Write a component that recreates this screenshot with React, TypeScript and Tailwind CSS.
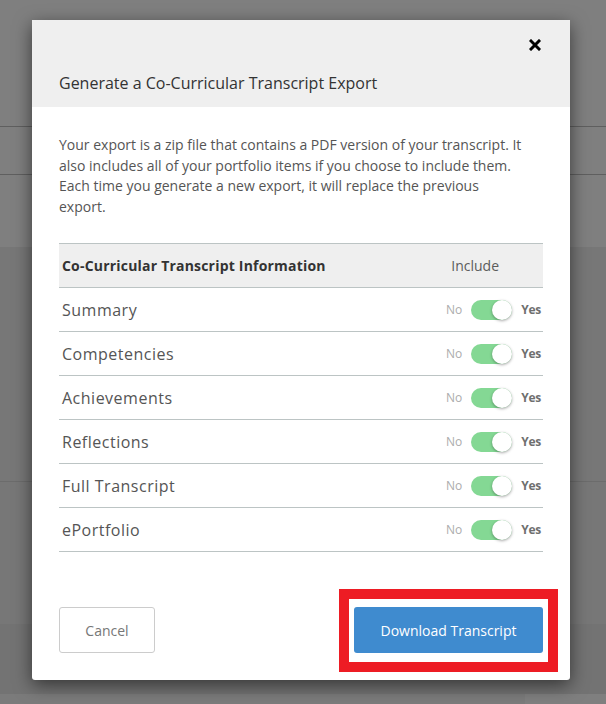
import React from "react";

const rows = [
  "Summary",
  "Competencies",
  "Achievements",
  "Reflections",
  "Full Transcript",
  "ePortfolio",
];

function Toggle() {
  return (
    <div className="flex items-center">
      <span className="text-[12px] text-[#acacac]">No</span>
      <span className="ml-[9px] flex h-[20px] w-[41px] items-center justify-end rounded-full bg-[#84d894]">
        <span className="h-[20px] w-[20px] rounded-full bg-white shadow-[0_1px_3px_rgba(0,0,0,0.35)]" />
      </span>
      <span className="ml-[9px] text-[12px] font-bold tracking-[-0.3px] text-[#6f6f6f]">Yes</span>
    </div>
  );
}

export default function App() {
  return (
    <div
      className="relative h-[704px] w-[606px] overflow-hidden bg-[#7f7f7f]"
      style={{ fontFamily: '"Open Sans", "Liberation Sans", Arial, sans-serif' }}
    >
      {/* dimmed page underneath */}
      <div className="flex flex-col">
        <div className="h-[126px]" />
        <div className="h-px bg-[#5f5f5f]" />
        <div className="h-[47px]" />
        <div className="h-px bg-[#5f5f5f]" />
        <div className="h-[72px]" />
        <div className="h-[234px] bg-[#777777]" />
        <div className="h-px bg-[#6c6c6c]" />
        <div className="h-[142px] bg-[#777777]" />
        <div className="h-[70px] bg-[#737373]" />
        <div className="h-[10px] w-[525px] bg-[#7b7b7b]" />
      </div>

      {/* modal */}
      <div className="absolute left-[32px] top-[20px] flex h-[660px] w-[538px] flex-col rounded-b-[3px] bg-white shadow-[0_5px_18px_rgba(0,0,0,0.55)]">
        <div className="flex h-[87px] flex-col bg-[#efefef] pl-[27px] pr-[29px] pt-[19px]">
          <button className="self-end text-black" aria-label="Close">
            <svg width="12" height="12" viewBox="0 0 12 12">
              <path
                d="M2 2 L10 10 M10 2 L2 10"
                stroke="currentColor"
                strokeWidth="3"
                strokeLinecap="square"
              />
            </svg>
          </button>
          <h2 className="mt-[20px] text-[16px] leading-[24px] text-[#333333]">
            Generate a Co-Curricular Transcript Export
          </h2>
        </div>

        <div className="flex flex-1 flex-col px-[27px] pt-[28px]">
          <p className="text-[14px] leading-[20.5px] text-[#555555]">
            Your export is a zip file that contains a PDF version of your transcript. It
            <br />
            also includes all of your portfolio items if you choose to include them.
            <br />
            Each time you generate a new export, it will replace the previous
            <br />
            export.
          </p>

          <div className="mt-[26px] border-t border-[#bcc4c4]">
            <div className="flex h-[44px] items-center justify-between border-b border-[#bcc4c4] bg-[#efefef] pl-[3px] pr-[44px]">
              <span className="text-[14px] font-bold tracking-[0.2px] text-[#333333]">
                Co-Curricular Transcript Information
              </span>
              <span className="text-[14px] text-[#5c5c5c]">Include</span>
            </div>
            {rows.map((r) => (
              <div
                key={r}
                className="flex h-[44px] items-center justify-between border-b border-[#bcc4c4] pl-[3px] pr-[2px]"
              >
                <span className="text-[16px] tracking-[0.5px] text-[#555555]">{r}</span>
                <Toggle />
              </div>
            ))}
          </div>

          <div className="mt-[55px] flex items-center justify-between">
            <button className="h-[46px] w-[96px] rounded-[3px] border border-[#cccccc] bg-white text-[14px] text-[#777777]">
              Cancel
            </button>
            <div className="relative">
              <button className="h-[46px] w-[189px] rounded-[3px] bg-[#3f8bcf] text-[14px] text-white">
                Download Transcript
              </button>
              <div className="pointer-events-none absolute -bottom-[19px] -left-[15px] -right-[15px] -top-[18px] border-[10px] border-[#ed1c24]" />
            </div>
          </div>
        </div>
      </div>
    </div>
  );
}
